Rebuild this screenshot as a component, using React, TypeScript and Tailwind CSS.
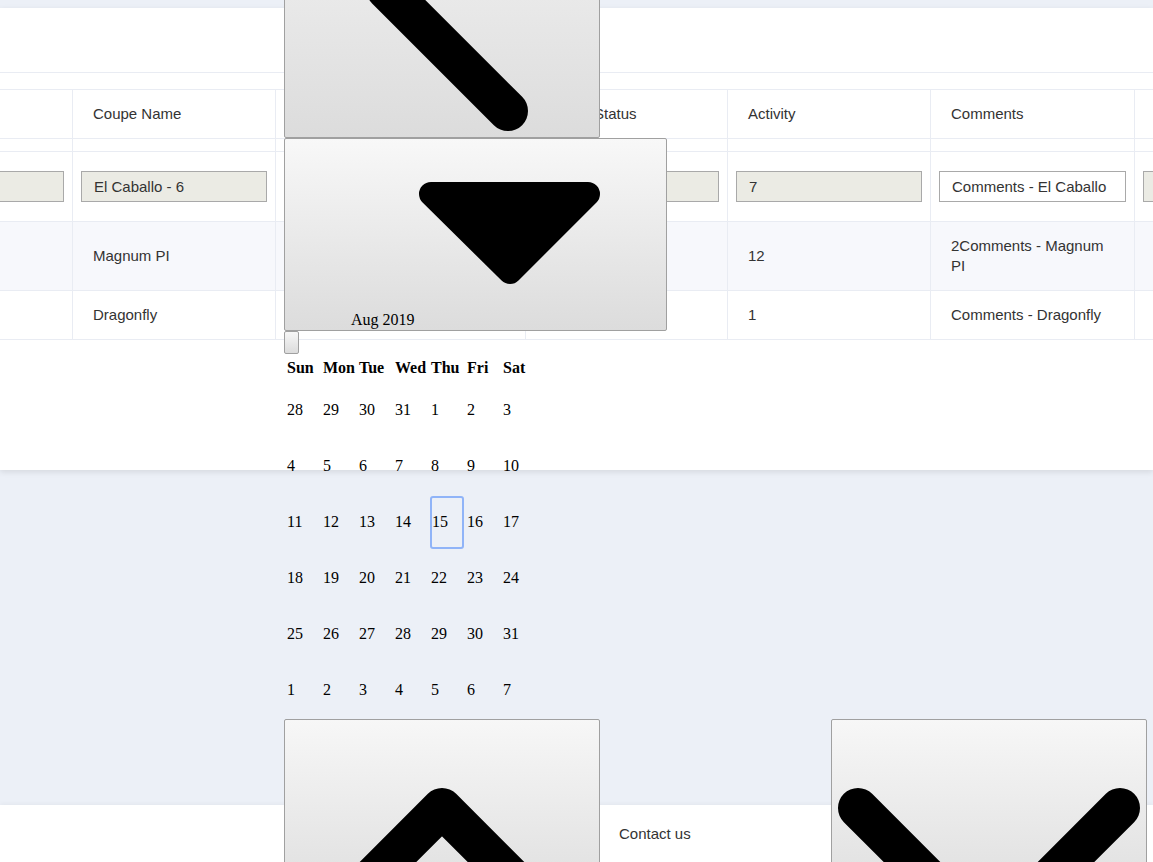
import React from 'react';

const cols = 'grid grid-cols-[203px_203px_250px_202px_203px_204px_203px] ml-[-131px]';
const cell = 'border-l border-[#e9ecf3] px-5 py-[14px] leading-5';

const weeks = [
  [28, 29, 30, 31, 1, 2, 3],
  [4, 5, 6, 7, 8, 9, 10],
  [11, 12, 13, 14, 15, 16, 17],
  [18, 19, 20, 21, 22, 23, 24],
  [25, 26, 27, 28, 29, 30, 31],
  [1, 2, 3, 4, 5, 6, 7],
];

const dayNames = ['Sun', 'Mon', 'Tue', 'Wed', 'Thu', 'Fri', 'Sat'];

const rows = [
  { id: '2', coupe: 'Magnum PI', date: '12/08/2019', status: 'Open', activity: '12', comments: '2Comments - Magnum PI' },
  { id: '3', coupe: 'Dragonfly', date: '02/08/2019', status: 'Closed', activity: '1', comments: 'Comments - Dragonfly' },
];

const Field: React.FC<{ value: string; editable?: boolean }> = ({ value, editable }) => (
  <input
    readOnly
    value={value}
    className={`block w-full h-[31px] border border-[#a9a9a9] px-3 text-[15px] text-[#333] outline-none ${editable ? 'bg-white' : 'bg-[#ebebe4]'}`}
  />
);

const btn = 'relative block border border-[#a0a0a0] rounded-[2px] bg-linear-to-b from-[#f7f7f7] to-[#dcdcdc] p-0';

const DatePopup: React.FC = () => (
  <div className="absolute left-[284px] top-[-150px] flex flex-col items-start font-['Liberation_Serif','Times_New_Roman',serif] text-[16px] text-black">
    {/* previous month */}
    <button type="button" className={`${btn} w-[316px] h-[288px]`}>
      <svg width="316" height="288" className="absolute left-0 top-0 overflow-visible" fill="none" stroke="#000" strokeWidth="40" strokeLinecap="round" strokeLinejoin="round">
        <polyline points="223,18 101,138 223,260" />
      </svg>
    </button>

    {/* month / year switch */}
    <button type="button" className={`${btn} w-[383px] h-[193px] from-[#f8f8f8]`}>
      <svg width="383" height="193" className="absolute left-0 top-0 overflow-visible" fill="#000" stroke="#000" strokeWidth="24" strokeLinejoin="round">
        <polygon points="146,55 303,55 225,133" />
      </svg>
      <span className="absolute left-[66px] top-[172px] leading-[18px] whitespace-nowrap">Aug 2019</span>
    </button>

    <button type="button" className={`${btn} w-[15px] h-[23px]`} />

    {/* calendar */}
    <div className="ml-px grid grid-cols-[repeat(7,36px)]">
      {dayNames.map((d) => (
        <div key={d} className="h-[28px] flex items-center pl-[2px] font-bold">
          {d}
        </div>
      ))}
      {weeks.flat().map((d, i) => (
        <div key={i} className="relative h-[56px] flex items-center pl-[2px]">
          {i === 18 && (
            <span className="absolute left-px right-px top-[2px] bottom-px border-2 border-[#90b4f8] rounded-[3px]" />
          )}
          <span className={i === 18 ? 'pl-px' : ''}>{d}</span>
        </div>
      ))}
    </div>

    <div className="mt-px flex gap-[231px]">
      <button type="button" className={`${btn} w-[316px] h-[200px]`}>
        <svg width="316" height="200" className="absolute left-0 top-0 overflow-visible" fill="none" stroke="#000" strokeWidth="40" strokeLinecap="round" strokeLinejoin="round">
          <polyline points="37,208 157,88 277,208" />
        </svg>
      </button>
      <button type="button" className={`${btn} w-[316px] h-[200px]`}>
        <svg width="316" height="200" className="absolute left-0 top-0 overflow-visible" fill="none" stroke="#000" strokeWidth="40" strokeLinecap="round" strokeLinejoin="round">
          <polyline points="26,88 157,219 288,88" />
        </svg>
      </button>
    </div>
  </div>
);

export default function App() {
  return (
    <div className="relative h-[862px] overflow-hidden bg-[#ecf0f7] font-['Liberation_Sans',Arial,sans-serif] text-[15px] text-[#333]">
      <div className="pt-2">
        <div className="h-[462px] bg-white overflow-hidden shadow-[0_2px_6px_rgba(0,0,0,0.1)]">
          <div className="h-[65px] border-b border-[#e9ecf3]" />
          <div className="h-[17px] border-b border-[#e9ecf3]" />

          {/* header */}
          <div className={`${cols} border-b border-[#e9ecf3]`}>
            <div className={cell}>Coupe ID</div>
            <div className={cell}>Coupe Name</div>
            <div className={cell}>Date</div>
            <div className={`${cell} pl-[68px]`}>Status</div>
            <div className={cell}>Activity</div>
            <div className={cell}>Comments</div>
            <div className={cell}>Actions</div>
          </div>

          <div className={`${cols} h-[13px] border-b border-[#e9ecf3]`}>
            {Array.from({ length: 7 }).map((_, i) => (
              <div key={i} className="border-l border-[#e9ecf3]" />
            ))}
          </div>

          {/* editing row */}
          <div className={`${cols} border-b border-[#e9ecf3]`}>
            <div className="border-l border-[#e9ecf3] px-2 py-[19px]"><Field value="1" /></div>
            <div className="border-l border-[#e9ecf3] px-2 py-[19px]"><Field value="El Caballo - 6" /></div>
            <div className="border-l border-[#e9ecf3] px-2 py-[19px]"><Field value="15/08/2019" /></div>
            <div className="border-l border-[#e9ecf3] px-2 py-[19px]"><Field value="Open" /></div>
            <div className="border-l border-[#e9ecf3] px-2 py-[19px]"><Field value="7" /></div>
            <div className="border-l border-[#e9ecf3] px-2 py-[19px]"><Field value="Comments - El Caballo" editable /></div>
            <div className="border-l border-[#e9ecf3] px-2 py-[19px]"><Field value="" /></div>
          </div>

          {rows.map((r, i) => (
            <div key={r.id} className={`${cols} border-b border-[#e9ecf3] ${i === 0 ? 'bg-[#f7f8fc]' : ''}`}>
              <div className={cell}>{r.id}</div>
              <div className={`${cell} flex items-center`}>{r.coupe}</div>
              <div className={cell}>{r.date}</div>
              <div className={cell}>{r.status}</div>
              <div className={`${cell} flex items-center`}>{r.activity}</div>
              <div className={cell}>{r.comments}</div>
              <div className={cell} />
            </div>
          ))}
        </div>
      </div>

      <footer className="mt-[335px] h-[80px] bg-white pl-[619px] pt-[19px] leading-5 shadow-[0_-2px_4px_rgba(0,0,0,0.03)]">
        Contact us
      </footer>

      <DatePopup />
    </div>
  );
}
